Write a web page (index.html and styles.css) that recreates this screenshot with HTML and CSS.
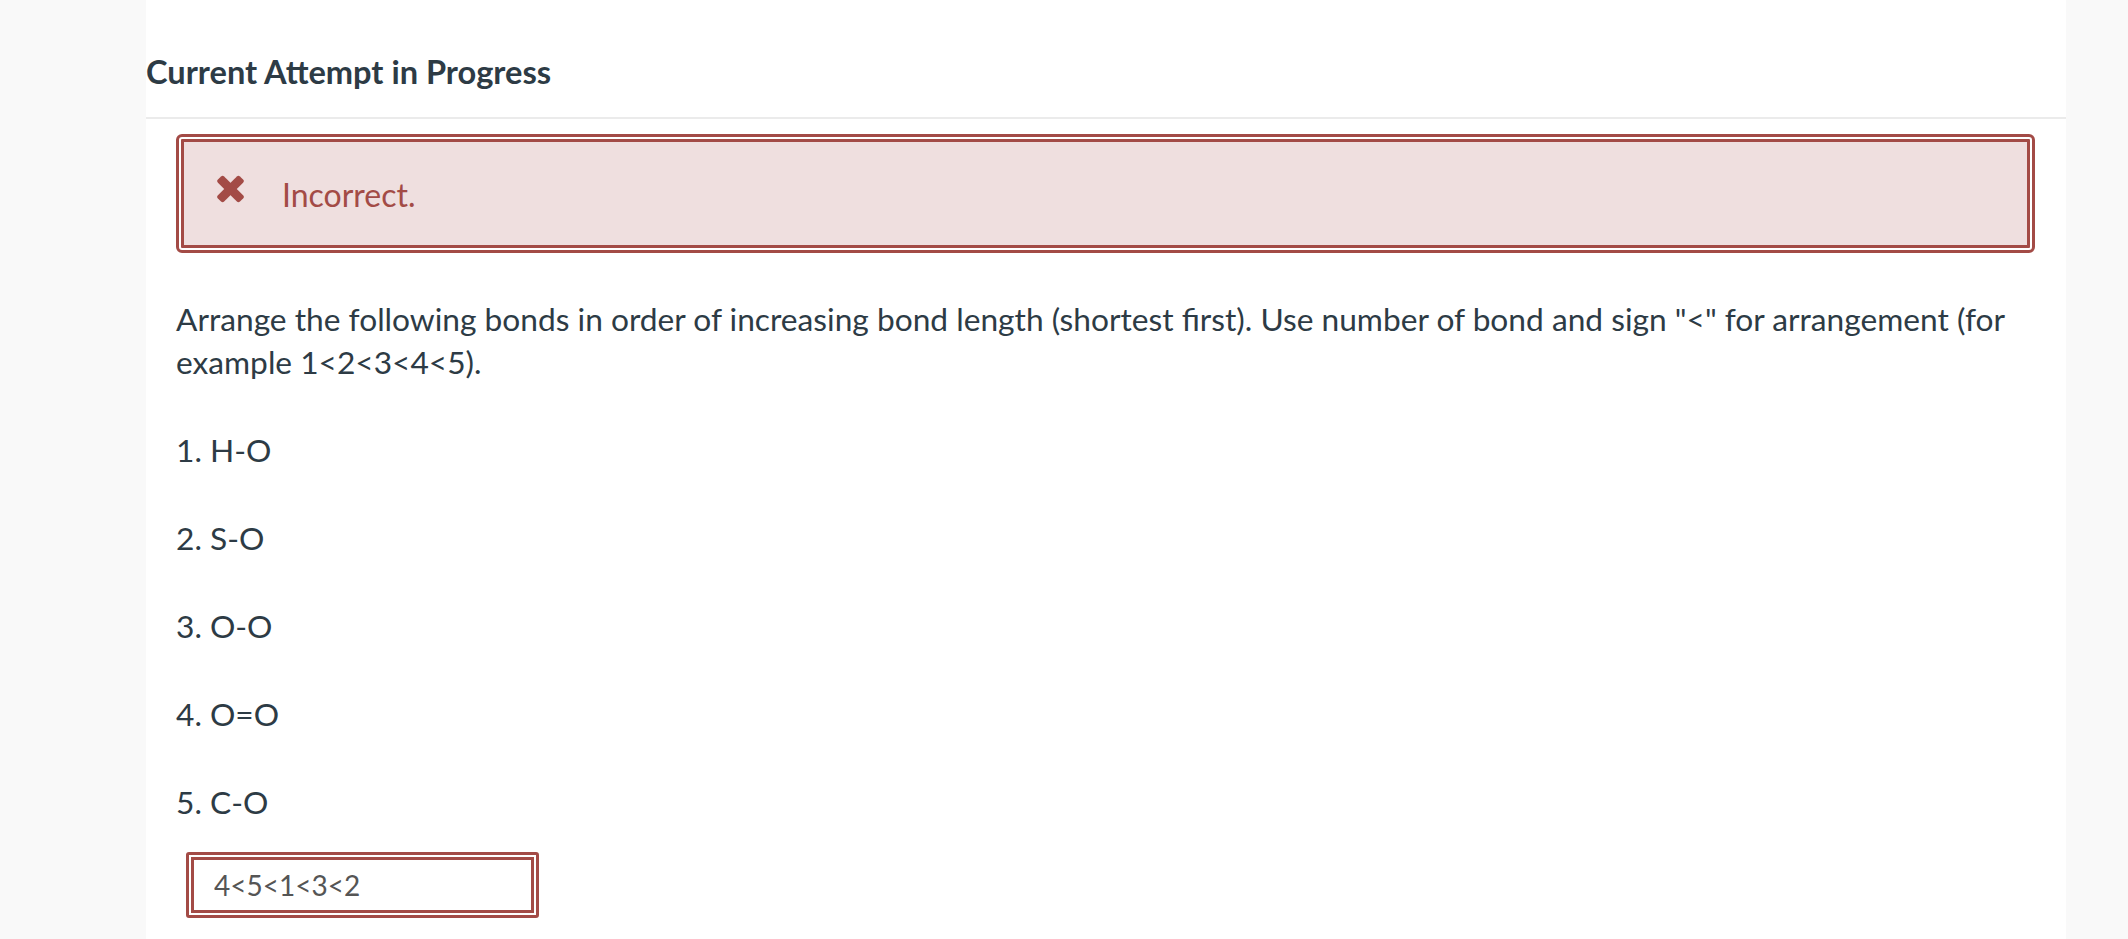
FILE: index.html
```html
<!DOCTYPE html>
<html lang="en">
<head>
<meta charset="utf-8">
<title>Current Attempt in Progress</title>
<link rel="stylesheet" href="styles.css">
</head>
<body>
<div class="page">
  <aside class="rail rail-left"></aside>
  <main class="main">
    <header class="attempt-header">
      <h2 class="attempt-title">Current Attempt in Progress</h2>
    </header>
    <section class="content">
      <div class="alert alert-error" role="alert">
        <svg class="alert-icon" width="29" height="28" viewBox="0 0 29 28" aria-hidden="true">
          <g transform="translate(14.5 14)" fill="#a34b46">
            <rect x="-15.6" y="-4.4" width="31.2" height="8.8" rx="2.2" transform="rotate(45)"/>
            <rect x="-15.6" y="-4.4" width="31.2" height="8.8" rx="2.2" transform="rotate(-45)"/>
          </g>
        </svg>
        <span class="alert-text">Incorrect.</span>
      </div>
      <div class="question-text">
        <p>Arrange the following bonds in order of increasing bond length (shortest first). Use number of bond and sign "&lt;" for arrangement (for example 1&lt;2&lt;3&lt;4&lt;5).</p>
        <p>1. H-O</p>
        <p>2. S-O</p>
        <p>3. O-O</p>
        <p>4. O=O</p>
        <p>5. C-O</p>
      </div>
      <div class="answer">
        <input class="answer-input" type="text" value="4&lt;5&lt;1&lt;3&lt;2" aria-label="Answer">
      </div>
    </section>
  </main>
  <aside class="rail rail-right"></aside>
</div>
</body>
</html>
```

FILE: styles.css
```css
html, body {
  margin: 0;
  padding: 0;
  height: 100%;
}

body {
  background: #f9f9f9;
  font-family: Lato, "Open Sans", "Liberation Sans", sans-serif;
  color: #2d3b45;
  overflow: hidden;
}

.page {
  display: flex;
  min-height: 939px;
}

.rail {
  background: #f9f9f9;
}

.rail-left {
  width: 146px;
  flex: 0 0 146px;
}

.rail-right {
  width: 62px;
  flex: 0 0 62px;
}

.main {
  flex: 1 1 auto;
  background: #ffffff;
  display: flex;
  flex-direction: column;
}

.attempt-header {
  padding: 54px 0 27px;
  border-bottom: 2px solid #ebebeb;
}

.attempt-title {
  margin: 0;
  font-size: 32.6px;
  line-height: 36px;
  font-weight: 700;
  color: #2d3b45;
}

.content {
  padding: 15px 31px 0 30px;
}

.alert {
  display: flex;
  align-items: flex-start;
  gap: 37px;
  padding: 30px 32px 28px;
  border: 8px double #a34b46;
  border-radius: 6px;
  background-color: #efdfdf;
  background-clip: padding-box;
}

.alert-icon {
  flex: 0 0 auto;
  margin-top: 3px;
  display: block;
}

.alert-text {
  font-size: 32px;
  line-height: 45px;
  color: #a34b46;
}

.question-text {
  margin-top: 45px;
}

.question-text p {
  margin: 0 0 45px;
  font-size: 31.7px;
  line-height: 43px;
  color: #2d3b45;
}

.question-text p:last-child {
  margin-bottom: 0;
}

.answer {
  margin-top: 28px;
  padding-left: 10px;
}

.answer-input {
  box-sizing: border-box;
  width: 353px;
  height: 66px;
  margin: 0;
  padding: 0 20px;
  border: 8px double #a34b46;
  border-radius: 3px;
  background-color: #ffffff;
  background-clip: padding-box;
  font-family: Lato, "Open Sans", "Liberation Sans", sans-serif;
  font-size: 28px;
  color: #555555;
  outline: none;
}
```
